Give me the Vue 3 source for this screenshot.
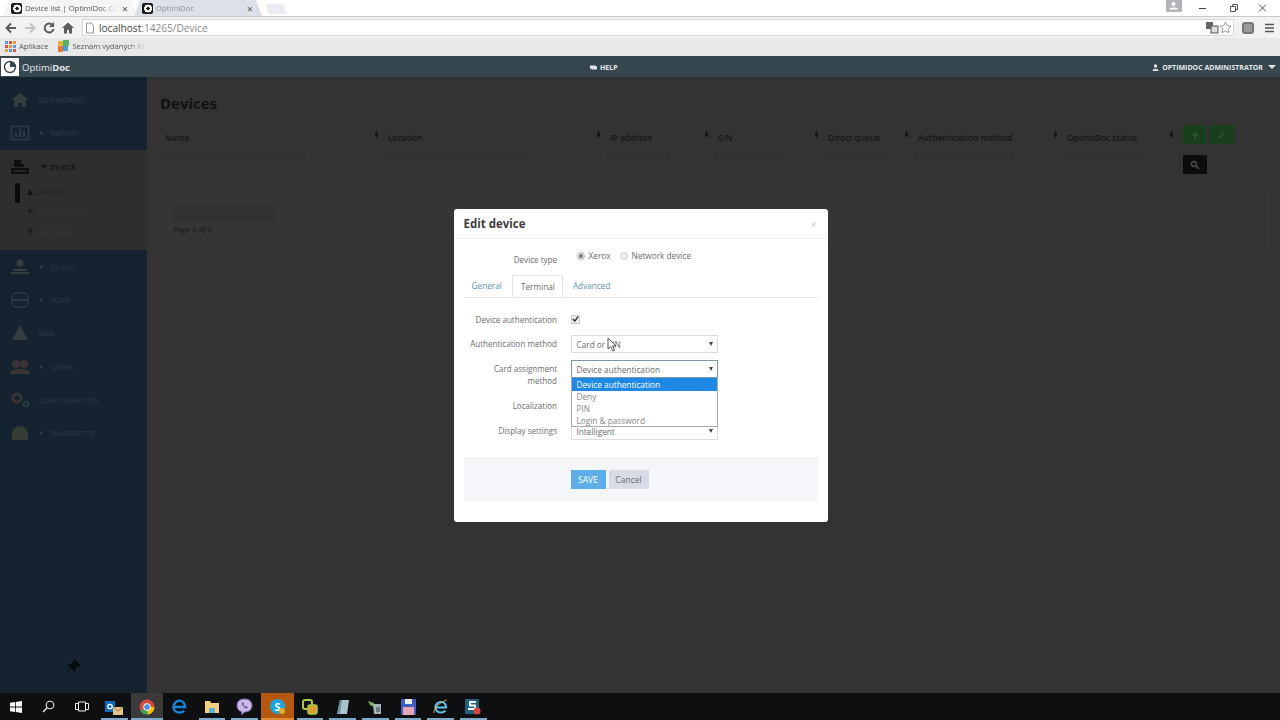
<script setup>
const columns = [
  { name: 'Name', width: 223, filter: 145 },
  { name: 'Location', width: 222, filter: 145 },
  { name: 'IP address', width: 108, filter: 64 },
  { name: 'S/N', width: 110, filter: 70 },
  { name: 'Direct queue', width: 90, filter: 60 },
  { name: 'Authentication method', width: 149, filter: 100 },
  { name: 'OptimiDoc status', width: 116, filter: 80 }
]
const options = ['Device authentication', 'Deny', 'PIN', 'Login & password']
</script>

<template>
  <div class="page">
    <!-- Chrome window -->
    <div class="tabstrip">
      <div class="tab active">
        <span class="favicon"></span>
        <span class="tab-title">Device list | OptimiDoc Cc</span>
        <span class="tab-x">×</span>
      </div>
      <div class="tab inactive">
        <span class="favicon"></span>
        <span class="tab-title">OptimiDoc</span>
        <span class="tab-x">×</span>
      </div>
      <div class="newtab"></div>
      <div class="winbtns">
        <span class="avatar">
          <svg width="15" height="12" viewBox="0 0 15 12"><circle cx="7.5" cy="4" r="2" fill="#fff"/><path d="M3.5 9c0-2 8-2 8 0v.6h-8z" fill="#fff"/></svg>
        </span>
        <svg class="ctl" width="30" height="16" viewBox="0 0 30 16"><path d="M11 8.500h7" stroke="#444" stroke-width="1"/></svg>
        <svg class="ctl" width="30" height="16" viewBox="0 0 30 16"><path d="M12.500 6.500h5v5h-5zM14.500 6.500v-2h5v5h-2" fill="none" stroke="#555" stroke-width="1"/></svg>
        <svg class="ctl" width="30" height="16" viewBox="0 0 30 16"><path d="M11 4.500l7 7M18 4.500l-7 7" stroke="#555" stroke-width="1"/></svg>
      </div>
    </div>
    <div class="toolbar">
      <svg class="nav" width="14" height="14" viewBox="0 0 14 14"><path d="M12 7H3M7 2.500L2.500 7 7 11.500" fill="none" stroke="#5c5c5c" stroke-width="2"/></svg>
      <svg class="nav" width="14" height="14" viewBox="0 0 14 14"><path d="M2 7h9M7 2.500L11.500 7 7 11.500" fill="none" stroke="#c4c4c4" stroke-width="2"/></svg>
      <svg class="nav" width="14" height="14" viewBox="0 0 14 14"><path d="M11 4.500a4.500 4.500 0 1 0 .6 3.500" fill="none" stroke="#5c5c5c" stroke-width="2"/><path d="M12 1v5H7z" fill="#5c5c5c"/></svg>
      <svg class="nav" width="14" height="14" viewBox="0 0 14 14"><path d="M7 1.500L1 7h2v5.500h3V9h2v3.500h3V7h2z" fill="#5c5c5c"/></svg>
      <div class="omnibox">
        <svg width="10" height="12" viewBox="0 0 10 12"><path d="M1.500 1h4.500l2.500 2.500V11h-7z" fill="none" stroke="#999"/></svg>
        <span class="url"><b>localhost</b>:14265/Device</span>
        <svg class="translate" width="14" height="13" viewBox="0 0 14 13"><rect x="1" y="1" width="7" height="7" fill="#666"/><rect x="6" y="5" width="7" height="7" fill="#ddd" stroke="#555"/></svg>
        <svg width="13" height="13" viewBox="0 0 13 13"><path d="M6.500 1l1.700 3.600 3.800.5-2.800 2.700.7 3.900-3.400-1.900-3.400 1.900.7-3.900L1 5.100l3.800-.5z" fill="#fff" stroke="#999"/></svg>
      </div>
      <span class="ext"></span>
      <svg class="menu" width="11" height="10" viewBox="0 0 11 10"><path d="M1 1.500h9M1 5h9M1 8.500h9" stroke="#555" stroke-width="1.700"/></svg>
    </div>
    <div class="bookmarks">
      <svg width="11" height="11" viewBox="0 0 11 11">
        <g v-for="row in 3" :key="row">
          <rect v-for="col in 3" :key="col" :x="(col - 1) * 4" :y="(row - 1) * 4" width="3" height="3" :fill="['#d9534f', '#e0a030', '#5b9bd5'][(row + col) % 3]" />
        </g>
      </svg>
      <span class="bm">Aplikace</span>
      <svg class="bm-icon" width="12" height="12" viewBox="0 0 12 12"><path d="M1 1h5v5H1z" fill="#e8b13a"/><path d="M6 0h6v6H6z" fill="#58b368"/><path d="M1 6h5v6H1z" fill="#e9793a"/><path d="M6 6h5v5H6z" fill="#4b9cd3"/></svg>
      <span class="bm fade">Seznam vydaných fal</span>
    </div>

    <!-- App header -->
    <header class="appbar">
      <span class="logo">
        <svg width="14" height="14" viewBox="0 0 14 14"><circle cx="7" cy="7" r="5.500" fill="none" stroke="#37474f" stroke-width="1.400"/><path d="M7 7V1.500A5.500 5.500 0 0 1 12.500 7z" fill="#37474f"/></svg>
      </span>
      <span class="brand">Optimi<b>Doc</b></span>
      <span class="help">
        <svg width="7" height="7" viewBox="0 0 7 7"><path d="M0 1.500h5l2 1v3H2l-2-1z" fill="#dfe3e6"/></svg>
        HELP
      </span>
      <span class="user">
        <svg width="7" height="7" viewBox="0 0 7 7"><circle cx="3.500" cy="2" r="1.700" fill="#dfe3e6"/><path d="M.5 7c0-3 6-3 6 0z" fill="#dfe3e6"/></svg>
        OPTIMIDOC ADMINISTRATOR
        <i class="caret"></i>
      </span>
    </header>

    <div class="app-body">
      <aside class="sidebar">
        <div class="side-item"><svg class="side-icon" viewBox="0 0 20 16"><path d="M10 1L1 8h3v7h4v-4h4v4h4V8h3z" fill="#343d40"/></svg><span class="side-label">DASHBOARD</span></div>
        <div class="side-item"><svg class="side-icon" viewBox="0 0 20 16"><rect x="1.500" y="1.500" width="17" height="13" fill="none" stroke="#2c3b45" stroke-width="1.500"/><path d="M6 12V8M10 12V4M14 12V6" stroke="#2c3b45" stroke-width="2"/></svg><i class="side-arrow"></i><span class="side-label">REPORT</span></div>
        <section class="side-open">
          <div class="side-item current"><svg class="side-icon" viewBox="0 0 20 16"><path d="M4 1h7v4h3v3H4zM1 9h18v6H1z" fill="#0e0e0e"/><path d="M4 12h12" stroke="#3a3a3a"/></svg><i class="side-arrow down"></i><span class="side-label">DEVICE</span></div>
          <div class="sub-list">
            <div class="sub-item selected"><span class="sub-dot"></span>Devices</div>
            <div class="sub-item"><span class="sub-dot faint"></span>Direct queues</div>
            <div class="sub-item"><span class="sub-dot faint"></span>Hardware</div>
          </div>
        </section>
        <div class="side-item"><svg class="side-icon" viewBox="0 0 20 16"><circle cx="10" cy="4" r="3.500" fill="#343d40"/><path d="M3 10h14v2H3zM1 13h18v2H1z" fill="#343d40"/></svg><i class="side-arrow"></i><span class="side-label">CLIENT</span></div>
        <div class="side-item"><svg class="side-icon" viewBox="0 0 20 16"><rect x="2" y="1" width="16" height="14" rx="4" fill="none" stroke="#2c3b45" stroke-width="1.500"/><path d="M2 8h16" stroke="#2c3b45" stroke-width="2"/></svg><i class="side-arrow"></i><span class="side-label">SCAN</span></div>
        <div class="side-item"><svg class="side-icon" viewBox="0 0 20 16"><path d="M10 0l8 15H2z" fill="#343d40"/></svg><span class="side-label">MAIL</span></div>
        <div class="side-item"><svg class="side-icon" viewBox="0 0 20 16"><circle cx="6" cy="5" r="4" fill="#3a3534"/><circle cx="14" cy="5" r="4" fill="#3a3534"/><path d="M0 15c0-7 20-7 20 0z" fill="#3a3534"/></svg><i class="side-arrow"></i><span class="side-label">USERS</span></div>
        <div class="side-item"><svg class="side-icon" viewBox="0 0 20 16"><circle cx="7" cy="6" r="4" fill="none" stroke="#3a3534" stroke-width="3"/><circle cx="16" cy="12" r="2.500" fill="none" stroke="#2c3b45" stroke-width="2"/></svg><span class="side-label">CONFIGURATION</span></div>
        <div class="side-item"><svg class="side-icon" viewBox="0 0 20 16"><path d="M2 15V9a8 8 0 0 1 16 0v6z" fill="#343a34"/></svg><i class="side-arrow"></i><span class="side-label">DIAGNOSTIC</span></div>
        <svg class="pin" width="16" height="16" viewBox="0 0 16 16"><path d="M9 1l6 6-2 .5-3 3-.5 3L3 7l3-.5 3-3zM5 11l-4 4" fill="#050a0e" stroke="#050a0e"/></svg>
      </aside>

      <main class="content">
        <h1>Devices</h1>
        <div class="table-head">
          <div v-for="col in columns" :key="col.name" class="col" :style="{ width: col.width + 'px' }">
            <div class="th">
              <span>{{ col.name }}</span>
              <i class="sort"></i>
            </div>
            <div class="filter" :style="{ width: col.filter + 'px' }"></div>
          </div>
          <div class="actions">
            <div class="act-row">
              <span class="act green">
                <svg width="8" height="8" viewBox="0 0 8 8"><path d="M4 0v8M0 4h8" stroke="#2a5a2a" stroke-width="1.500"/></svg>
              </span>
              <span class="act green wide">
                <svg width="8" height="8" viewBox="0 0 8 8"><path d="M1 7l6-6" stroke="#2a5a2a" stroke-width="1.500"/></svg>
              </span>
            </div>
            <span class="act search">
              <svg width="10" height="10" viewBox="0 0 10 10"><circle cx="4" cy="4" r="2.500" fill="none" stroke="#4a4a4a" stroke-width="1.500"/><path d="M6 6l3 3" stroke="#4a4a4a" stroke-width="1.500"/></svg>
            </span>
          </div>
        </div>
        <div class="pager">
          <div class="pager-box"></div>
          <em>Page 0 of 0</em>
        </div>
      </main>

      <!-- Dark backdrop and dialog -->
      <div class="backdrop">
        <div class="modal">
          <div class="modal-head">
            <h2>Edit device</h2>
            <span class="close">×</span>
          </div>
          <div class="modal-body">
            <div class="type-row">
              <label class="lbl">Device type</label>
              <div class="radios">
                <span class="radio on"></span><span>Xerox</span>
                <span class="radio"></span><span>Network device</span>
              </div>
            </div>
            <div class="tabs">
              <span class="m-tab">General</span>
              <span class="m-tab current">Terminal</span>
              <span class="m-tab">Advanced</span>
            </div>
            <div class="form">
              <div class="row check-row">
                <label class="lbl">Device authentication</label>
                <span class="check">
                  <svg width="8" height="8" viewBox="0 0 8 8"><path d="M1 4l2.200 2.500L7 1" fill="none" stroke="#333" stroke-width="1.600"/></svg>
                </span>
              </div>
              <div class="row">
                <label class="lbl">Authentication method</label>
                <div class="select"><span>Card or PIN</span></div>
                <svg class="cursor" width="10" height="15" viewBox="0 0 10 15"><path d="M1 1v11l2.700-2.500 2 4.500 1.800-.8-2-4.300H9z" fill="#fff" stroke="#333" stroke-width=".8"/></svg>
              </div>
              <div class="row two-line">
                <label class="lbl">Card assignment method</label>
                <div class="select-wrap">
                  <div class="select focus"><span>Device authentication</span></div>
                  <ul class="dropdown">
                    <li v-for="(opt, i) in options" :key="opt" :class="{ hl: i === 0 }">{{ opt }}</li>
                  </ul>
                </div>
              </div>
              <div class="row">
                <label class="lbl">Localization</label>
                <div class="select"></div>
              </div>
              <div class="row">
                <label class="lbl">Display settings</label>
                <div class="select"><span>Intelligent</span></div>
              </div>
            </div>
            <div class="foot">
              <button class="save">SAVE</button>
              <button class="cancel">Cancel</button>
            </div>
          </div>
        </div>
      </div>
    </div>

    <!-- Windows taskbar -->
    <footer class="taskbar">
      <div class="cell">
        <svg width="12" height="12" viewBox="0 0 12 12"><path d="M0 1.700l5-.7v4.600H0zM5.800.9L12 0v5.600H5.800zM0 6.400h5V11l-5-.7zM5.800 6.400H12V12l-6.200-.9z" fill="#fff"/></svg>
      </div>
      <div class="cell">
        <svg width="13" height="13" viewBox="0 0 13 13"><circle cx="8" cy="5" r="3.800" fill="none" stroke="#eee" stroke-width="1.100"/><path d="M5.200 7.800L1 12" stroke="#eee" stroke-width="1.300"/></svg>
      </div>
      <div class="cell">
        <svg width="14" height="11" viewBox="0 0 14 11"><path d="M3.500 1h7v9h-7zM3 2.500H.5v6H3M11 2.500h2.500v6H11" fill="none" stroke="#eee"/></svg>
      </div>
      <div class="cell run">
        <svg width="18" height="18" viewBox="0 0 18 18"><rect x="0" y="3" width="10" height="11" fill="#0f6cbd"/><circle cx="5" cy="8.500" r="2.200" fill="none" stroke="#fff" stroke-width="1.300"/><rect x="8" y="9" width="10" height="8" fill="#e6c38a"/><path d="M8 9l5 4 5-4" fill="none" stroke="#9a7a45"/></svg>
      </div>
      <div class="cell run chrome-cell">
        <svg width="16" height="16" viewBox="0 0 16 16"><circle cx="8" cy="8" r="7.500" fill="#d9493a"/><path d="M8 8L1.500 12a7.500 7.500 0 0 0 7.500 3.400z" fill="#3aa757"/><path d="M8 8h7.400a7.500 7.500 0 0 1-6.400 7.400z" fill="#f4c20d"/><circle cx="8" cy="8" r="3.400" fill="#4a90d9" stroke="#fff"/></svg>
      </div>
      <div class="cell">
        <svg width="15" height="15" viewBox="0 0 15 15"><path d="M2 8h11c0-3.800-2.300-6.200-5.500-6.200S1.500 4.500 1.500 8c0 3.600 2.700 5.500 5.800 5.500 2 0 3.700-.6 5-1.600" fill="none" stroke="#1583d8" stroke-width="2.400"/></svg>
      </div>
      <div class="cell run">
        <svg width="16" height="14" viewBox="0 0 16 14"><path d="M1 1h5l1 2h8v10H1z" fill="#f3d27a"/><rect x="5" y="8" width="6" height="5" fill="#58b3d8"/></svg>
      </div>
      <div class="cell run">
        <svg width="17" height="18" viewBox="0 0 17 18"><path d="M8.500 1c5 0 7.500 2.500 7.500 6.500S13.500 14 8.500 14l-3 3v-3.300C2.500 12.800 1 10.800 1 7.500 1 3.500 3.500 1 8.500 1z" fill="#c9b8e8" stroke="#7a5ba6"/><path d="M6 4.500c-1 1 .8 4.800 4.500 6 1-.2 1.500-1.200 1.200-1.600L10 7.800l-.8.600C8.500 8 8 7.400 7.600 6.700l.6-.8L7 4.300c-.4-.2-.7 0-1 .2z" fill="#7a5ba6"/></svg>
      </div>
      <div class="cell run skype-cell">
        <span class="skype">S</span><i class="skype-badge"></i>
      </div>
      <div class="cell run">
        <svg width="16" height="16" viewBox="0 0 16 16"><rect x="1" y="1" width="9" height="9" rx="2" fill="none" stroke="#a7c94a" stroke-width="2"/><rect x="6" y="6" width="9" height="9" rx="2" fill="#e0a030" stroke="#a7c94a" stroke-width="1.500"/></svg>
      </div>
      <div class="cell run">
        <svg width="16" height="16" viewBox="0 0 16 16"><path d="M5 1h9l-2 14H2z" fill="#a9c4cc"/><path d="M5 1l-3 14 3-1 2-13z" fill="#6d8f99"/></svg>
      </div>
      <div class="cell run">
        <svg width="16" height="16" viewBox="0 0 16 16"><path d="M1 2l6 2v4L3 6z" fill="#7fb04f"/><path d="M6 5h8v10H7z" fill="#a8b5b8"/><path d="M9 8h4v5H9z" fill="#6d7b80"/></svg>
      </div>
      <div class="cell run">
        <svg width="15" height="16" viewBox="0 0 15 16"><rect width="15" height="16" rx="1" fill="#3f5fc0"/><rect x="4" y="0" width="7" height="5" fill="#f1f1f1"/><rect x="2" y="8" width="11" height="8" fill="#e7a5b8"/></svg>
      </div>
      <div class="cell run">
        <svg width="16" height="16" viewBox="0 0 16 16"><path d="M3 8.500h10c0-3.500-2-5.500-5-5.500S2.500 5.500 2.500 8.500 5 13.500 8 13.500c1.800 0 3.300-.6 4.500-1.700" fill="none" stroke="#5cc0ec" stroke-width="2.200"/><path d="M1 14C0 10 8 2 14 1" fill="none" stroke="#e6c13a" stroke-width=".8"/></svg>
      </div>
      <div class="cell run">
        <svg width="16" height="16" viewBox="0 0 16 16"><rect x="0" y="0" width="14" height="15" fill="#1f5f80"/><path d="M11 3H5v3.500h5V10H3" fill="none" stroke="#fff" stroke-width="1.800"/><circle cx="12" cy="12" r="3.500" fill="#d9443a"/></svg>
      </div>
    </footer>
  </div>
</template>

<style scoped>
.page {
  width: 1280px;
  height: 720px;
  display: flex;
  flex-direction: column;
  overflow: hidden;
  font-family: "Open Sans", "Liberation Sans", sans-serif;
  background: #333;
}

/* chrome */
.tabstrip {
  height: 17px;
  box-sizing: border-box;
  background: #fff;
  display: flex;
  align-items: flex-end;
  padding-left: 3px;
  border-bottom: 1px solid #c9c9c9;
  flex: none;
}
.tab {
  height: 16px;
  box-sizing: border-box;
  display: flex;
  align-items: center;
  gap: 3px;
  padding: 0 9px 0 8px;
  font-size: 7.600px;
  clip-path: polygon(0 100%, 6px 0, calc(100% - 6px) 0, 100% 100%);
}
.tab.active {
  width: 134px;
  background: #f5f5f5;
  color: #555;
}
.tab.inactive {
  width: 128px;
  margin-left: -3px;
  background: #dde0e7;
  color: #8b8f99;
}
.favicon {
  width: 11px;
  height: 11px;
  flex: none;
  border-radius: 2px;
  background: radial-gradient(circle at 55% 50%, #1a1a1a 0 20%, #f2f2f2 22% 48%, #1a1a1a 50%);
}
.tab-title {
  flex: 1;
  white-space: nowrap;
  mask-image: linear-gradient(to right, #000 78%, transparent 100%);
}
.tab-x {
  font-size: 11px;
  line-height: 1;
  color: #555;
}
.newtab {
  width: 18px;
  height: 10px;
  margin-left: 5px;
  margin-bottom: 2px;
  background: #e9ecf1;
  transform: skewX(20deg);
}
.winbtns {
  margin-left: auto;
  display: flex;
  align-self: flex-start;
  align-items: flex-start;
  padding-right: 2px;
}
.avatar {
  width: 16px;
  height: 12px;
  background: #b3b3b8;
  margin-right: 6px;
  display: flex;
}
.ctl {
  width: 30px;
}
.toolbar {
  height: 21px;
  flex: none;
  background: #f2f2f2;
  display: flex;
  align-items: center;
  padding-left: 4px;
}
.nav {
  margin-right: 5px;
  flex: none;
}
.omnibox {
  width: 1152px;
  height: 17px;
  margin-left: 2px;
  box-sizing: border-box;
  background: #fff;
  border: 1px solid #d8d8d8;
  display: flex;
  align-items: center;
  gap: 4px;
  padding: 0 1px 0 2px;
}
.url {
  flex: 1;
  font-size: 10.100px;
  color: #8b8b8b;
}
.url b {
  font-weight: 400;
  color: #444;
}
.translate {
  margin-right: -4px;
}
.ext {
  width: 12px;
  height: 12px;
  box-sizing: border-box;
  margin-left: 8px;
  background: #9b9b9b;
  border: 2px solid #777;
  border-radius: 3px;
}
.menu {
  margin-left: 10px;
}
.bookmarks {
  height: 18px;
  box-sizing: border-box;
  padding: 0 0 2px 5px;
  flex: none;
  background: #e8e8e8;
  display: flex;
  align-items: center;
  gap: 3px;
}
.bm {
  font-size: 7.600px;
  color: #555;
}
.bm.fade {
  white-space: nowrap;
  mask-image: linear-gradient(to right, #000 75%, transparent 100%);
}
.bm-icon {
  margin-left: 6px;
}

/* app header */
.appbar {
  height: 21px;
  box-sizing: border-box;
  padding-top: 1px;
  flex: none;
  background: #37474f;
  color: #e4e8ea;
  display: flex;
  align-items: center;
  font-size: 7px;
  font-weight: 700;
  position: relative;
  z-index: 2;
}
.logo {
  width: 18px;
  height: 18px;
  margin-left: 1px;
  background: #fff;
  display: flex;
  align-items: center;
  justify-content: center;
}
.brand {
  font-size: 9.500px;
  font-weight: 400;
  margin-left: 3px;
}
.brand b {
  font-weight: 700;
}
.help {
  margin-left: 520px;
  display: flex;
  align-items: center;
  gap: 3px;
}
.user {
  margin-left: auto;
  padding-right: 4px;
  display: flex;
  align-items: center;
  gap: 3px;
}
.caret {
  width: 0;
  height: 0;
  margin-left: 2px;
  border: 4px solid transparent;
  border-top-color: #e4e8ea;
  border-bottom: 0;
}

/* app body */
.app-body {
  flex: 1;
  display: flex;
  position: relative;
  min-height: 0;
}
.sidebar {
  width: 147px;
  flex: none;
  background: #14232f;
  padding-top: 6px;
  position: relative;
  font-size: 7.500px;
  color: #2d3c47;
}
.side-item {
  height: 33.300px;
  display: flex;
  align-items: center;
  padding-left: 10px;
}
.side-icon {
  width: 20px;
  height: 16px;
  flex: none;
}
.side-arrow {
  width: 0;
  height: 0;
  margin-left: 10px;
  border: 2px solid transparent;
  border-left: 3px solid #2d3c47;
  border-right: 0;
}
.side-arrow.down {
  margin-left: 11px;
  border: 3px solid transparent;
  border-top: 3px solid #0f0f0f;
  border-bottom: 0;
}
.side-label {
  margin-left: 8px;
  white-space: nowrap;
}
.side-open {
  height: 100.600px;
  background: #2e2e2e;
  color: #1a1a1a;
}
.side-open .side-item {
  color: #111;
  font-weight: 600;
  box-sizing: border-box;
  padding-top: 1px;
}
.side-open .side-arrow.down + .side-label {
  margin-left: 3px;
}
.sub-list {
  position: relative;
  padding-left: 27px;
  margin-top: -1px;
}
.sub-item {
  height: 20px;
  display: flex;
  align-items: center;
  gap: 3px;
  font-size: 8px;
  color: #1e1e1e;
}
.sub-item + .sub-item {
  color: #383838;
}
.sub-item.selected::before {
  content: "";
  position: absolute;
  left: 15px;
  top: 1px;
  width: 5px;
  height: 20px;
  background: #0a0a0a;
  border-radius: 2px;
}
.sub-dot {
  width: 6px;
  height: 6px;
  background: #111;
  clip-path: polygon(50% 0, 100% 100%, 0 100%);
}
.sub-dot.faint {
  background: #1e1e1e;
  clip-path: polygon(0 0, 100% 0, 50% 100%);
}
.pin {
  position: absolute;
  left: 65px;
  bottom: 19px;
}
.content {
  flex: 1;
  padding: 16px 0 0 10px;
  background: #333;
  border-left: 3px solid #353331;
  color: #171717;
  min-width: 0;
}
h1 {
  margin: 0;
  font-size: 15px;
  font-weight: 700;
  line-height: 20px;
  color: #121212;
}
.table-head {
  display: flex;
  margin-top: 10px;
  margin-left: 3px;
  height: 60px;
}
.col {
  flex: none;
}
.th {
  height: 30px;
  display: flex;
  justify-content: space-between;
  padding: 9px 8px 0 2px;
  box-sizing: border-box;
  font-size: 8.400px;
  font-weight: 600;
  color: #161616;
  white-space: nowrap;
}
.filter {
  height: 7px;
  margin-left: -2px;
  background: #313131;
}
.sort {
  width: 3px;
  height: 7px;
  margin-top: -1px;
  background: #161616;
  clip-path: polygon(50% 0, 100% 40%, 100% 60%, 50% 100%, 0 60%, 0 40%);
}
.actions {
  display: flex;
  flex-direction: column;
  gap: 11px;
  margin-left: 2px;
}
.act-row {
  display: flex;
  gap: 3px;
  margin-top: 2px;
}
.act {
  width: 23px;
  height: 19px;
  display: flex;
  align-items: center;
  justify-content: center;
}
.act.green {
  background: #1a3f1c;
}
.act.wide {
  width: 25px;
}
.act.search {
  background: #0c0c0c;
  width: 24px;
}
.pager {
  margin-top: 7px;
  width: 1110px;
  height: 60px;
  padding: 15px 0 0 13px;
  background: #353535;
  box-sizing: border-box;
  font-size: 8px;
}
.pager-box {
  width: 100px;
  height: 17px;
  background: #313131;
}
.pager em {
  display: block;
  margin-top: 1px;
}

/* backdrop and modal */
.backdrop {
  position: absolute;
  inset: 0;
  display: flex;
  justify-content: center;
  padding-top: 132px;
  padding-left: 1px;
  box-sizing: border-box;
}
.modal {
  width: 374px;
  height: 313px;
  background: #fff;
  border-radius: 3px;
  color: #6c6c6c;
  font-size: 8.250px;
  box-sizing: border-box;
  padding: 0 10px;
}
.modal-head {
  height: 30px;
  box-sizing: border-box;
  padding: 0 11px 0 10px;
  display: flex;
  align-items: center;
  justify-content: space-between;
  border-bottom: 1px solid #eee;
  margin: 0 -10px;
}
h2 {
  margin: 0;
  font-size: 11.500px;
  font-weight: 700;
  color: #3e3e3e;
}
.close {
  color: #c9c9c9;
  font-size: 10px;
}
.lbl {
  width: 93.500px;
  flex: none;
  text-align: right;
  line-height: 12px;
  font-size: 8.050px;
}
.type-row {
  display: flex;
  align-items: center;
  height: 27px;
  margin-top: 7px;
}
.radios {
  display: flex;
  align-items: center;
  gap: 4px;
  margin-left: 19.500px;
  margin-top: -8px;
}
.radio {
  width: 6px;
  height: 6px;
  border-radius: 50%;
  border: 1px solid #ccc;
  background: #eee;
}
.radio.on {
  background: #777;
  box-shadow: inset 0 0 0 1px #eee;
}
.radio:nth-child(3) {
  margin-left: 5px;
}
.tabs {
  display: flex;
  height: 22px;
  margin-top: 2px;
  border-bottom: 1px solid #e4e4e4;
}
.m-tab {
  padding: 0 8px;
  line-height: 22px;
  color: #5f94b3;
}
.m-tab.current {
  color: #6c6c6c;
  background: #fff;
  border: 1px solid #e4e4e4;
  border-bottom: 0;
  height: 22px;
  padding: 0 7px 0 8px;
  margin: 0 2px;
  box-sizing: border-box;
}
.form {
  padding-top: 15px;
}
.row {
  display: flex;
  align-items: center;
  position: relative;
  min-height: 18px;
  margin-bottom: 7px;
}
.row > .select,
.row > .select-wrap {
  margin-left: 13.500px;
}
.row.two-line {
  align-items: flex-start;
  height: 30px;
}
.row.two-line .lbl {
  padding-top: 3px;
}
.check-row {
  min-height: 14px;
  margin-bottom: 8px;
}
.check {
  width: 7px;
  height: 7px;
  margin: -2px 0 0 13.500px;
  border: 1px solid #ccc;
  background: #eee;
  display: flex;
  align-items: center;
  justify-content: center;
}
.select-wrap {
  position: relative;
  z-index: 2;
}
.select {
  width: 147px;
  height: 18px;
  box-sizing: border-box;
  border: 1px solid #ddd;
  padding-left: 5px;
  display: flex;
  align-items: center;
  position: relative;
  background: #fff;
}
.select::after {
  content: "";
  position: absolute;
  right: 4px;
  top: 6px;
  border: 2px solid transparent;
  border-top: 4px solid #444;
  border-bottom: 0;
}
.select.focus {
  border-color: #7d96ab;
}
.cursor {
  position: absolute;
  left: 143px;
  top: 2px;
  z-index: 3;
}
.dropdown {
  position: absolute;
  left: 0;
  top: 18px;
  width: 147px;
  height: 49px;
  margin: 0;
  padding: 0;
  list-style: none;
  background: #fff;
  border: 1px solid #aaa;
  border-top: 0;
  box-sizing: border-box;
  z-index: 3;
  color: #858585;
}
.dropdown li {
  height: 12px;
  line-height: 12px;
  padding-left: 5px;
}
.dropdown li.hl {
  height: 13px;
  line-height: 13px;
  background: #1e88e5;
  color: #fff;
}
.foot {
  margin-top: 18px;
  height: 43px;
  box-sizing: border-box;
  background: #f5f6fa;
  border-top: 1px solid #eaeaea;
  padding-bottom: 1px;
  display: flex;
  align-items: center;
  gap: 3px;
  padding-left: 107px;
}
button {
  height: 19px;
  border: 0;
  font-family: inherit;
  font-size: 8.500px;
  padding: 0;
}
.save {
  width: 35px;
  background: #5daee8;
  color: #fff;
}
.cancel {
  width: 40px;
  background: #d8dbe4;
  color: #6c6c6c;
}

/* taskbar */
.taskbar {
  height: 27px;
  flex: none;
  background: #0e0f10;
  display: flex;
  position: relative;
  z-index: 2;
}
.cell {
  width: 32.650px;
  height: 27px;
  flex: none;
  box-sizing: border-box;
  display: flex;
  align-items: center;
  justify-content: center;
  position: relative;
}
.cell.run::after {
  content: "";
  position: absolute;
  left: 3px;
  right: 3px;
  bottom: 0;
  height: 2px;
  background: #7fa9c9;
}
.chrome-cell {
  background: #3a3a3a;
}
.chrome-cell::after {
  left: 0 !important;
  right: 0 !important;
}
.skype-cell {
  background: #b3590f;
}
.skype-cell::after {
  left: 0 !important;
  right: 0 !important;
  background: #e08a3a !important;
}
.skype {
  width: 15px;
  height: 15px;
  border-radius: 50%;
  background: #19a5e0;
  color: #fff;
  font-size: 11px;
  font-weight: 700;
  display: flex;
  align-items: center;
  justify-content: center;
}
.skype-badge {
  position: absolute;
  right: 9px;
  bottom: 6px;
  width: 6px;
  height: 6px;
  border-radius: 50%;
  background: #e0b020;
}
</style>

<style>
html, body {
  margin: 0;
  background: #333;
}
</style>
